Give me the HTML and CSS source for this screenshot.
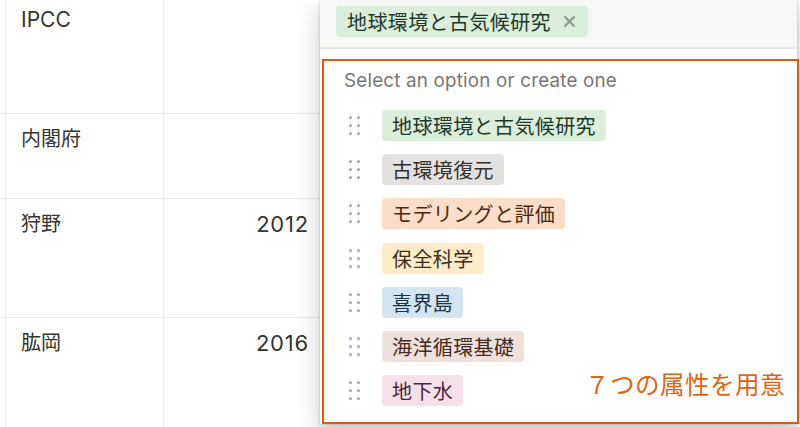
FILE: index.html
```html
<!DOCTYPE html>
<html lang="ja">
<head>
<meta charset="utf-8" />
<meta name="viewport" content="width=device-width, initial-scale=1" />
<title>Notion Multi-select</title>
<link rel="stylesheet" href="styles.css">
</head>
<body>
<div class="page">
  <!-- テーブル -->
  <div class="table">
    <div class="row row-1">
      <div class="cell name latin">IPCC</div>
      <div class="cell year"></div>
    </div>
    <div class="row row-2">
      <div class="cell name">内閣府</div>
      <div class="cell year"></div>
    </div>
    <div class="row row-3">
      <div class="cell name">狩野</div>
      <div class="cell year">2012</div>
    </div>
    <div class="row row-4">
      <div class="cell name">肱岡</div>
      <div class="cell year">2016</div>
    </div>
  </div>

  <!-- Multi-select ポップアップ -->
  <div class="popup">
    <div class="chips">
      <span class="tag green">地球環境と古気候研究
        <svg class="x" viewBox="0 0 13 13"><path d="M1.5 1.5L11.5 11.5M11.5 1.5L1.5 11.5"/></svg>
      </span>
    </div>
    <div class="menu">
      <div class="menu-head">Select an option or create one</div>
      <div class="opt"><svg class="handle" viewBox="0 0 11 19"><circle cx="1.5" cy="1.5" r="1.5"/><circle cx="9.5" cy="1.5" r="1.5"/><circle cx="1.5" cy="9.5" r="1.5"/><circle cx="9.5" cy="9.5" r="1.5"/><circle cx="1.5" cy="17.5" r="1.5"/><circle cx="9.5" cy="17.5" r="1.5"/></svg><span class="tag green">地球環境と古気候研究</span></div>
      <div class="opt"><svg class="handle" viewBox="0 0 11 19"><circle cx="1.5" cy="1.5" r="1.5"/><circle cx="9.5" cy="1.5" r="1.5"/><circle cx="1.5" cy="9.5" r="1.5"/><circle cx="9.5" cy="9.5" r="1.5"/><circle cx="1.5" cy="17.5" r="1.5"/><circle cx="9.5" cy="17.5" r="1.5"/></svg><span class="tag gray">古環境復元</span></div>
      <div class="opt"><svg class="handle" viewBox="0 0 11 19"><circle cx="1.5" cy="1.5" r="1.5"/><circle cx="9.5" cy="1.5" r="1.5"/><circle cx="1.5" cy="9.5" r="1.5"/><circle cx="9.5" cy="9.5" r="1.5"/><circle cx="1.5" cy="17.5" r="1.5"/><circle cx="9.5" cy="17.5" r="1.5"/></svg><span class="tag orange">モデリングと評価</span></div>
      <div class="opt"><svg class="handle" viewBox="0 0 11 19"><circle cx="1.5" cy="1.5" r="1.5"/><circle cx="9.5" cy="1.5" r="1.5"/><circle cx="1.5" cy="9.5" r="1.5"/><circle cx="9.5" cy="9.5" r="1.5"/><circle cx="1.5" cy="17.5" r="1.5"/><circle cx="9.5" cy="17.5" r="1.5"/></svg><span class="tag yellow">保全科学</span></div>
      <div class="opt"><svg class="handle" viewBox="0 0 11 19"><circle cx="1.5" cy="1.5" r="1.5"/><circle cx="9.5" cy="1.5" r="1.5"/><circle cx="1.5" cy="9.5" r="1.5"/><circle cx="9.5" cy="9.5" r="1.5"/><circle cx="1.5" cy="17.5" r="1.5"/><circle cx="9.5" cy="17.5" r="1.5"/></svg><span class="tag blue">喜界島</span></div>
      <div class="opt"><svg class="handle" viewBox="0 0 11 19"><circle cx="1.5" cy="1.5" r="1.5"/><circle cx="9.5" cy="1.5" r="1.5"/><circle cx="1.5" cy="9.5" r="1.5"/><circle cx="9.5" cy="9.5" r="1.5"/><circle cx="1.5" cy="17.5" r="1.5"/><circle cx="9.5" cy="17.5" r="1.5"/></svg><span class="tag brown">海洋循環基礎</span></div>
      <div class="opt"><svg class="handle" viewBox="0 0 11 19"><circle cx="1.5" cy="1.5" r="1.5"/><circle cx="9.5" cy="1.5" r="1.5"/><circle cx="1.5" cy="9.5" r="1.5"/><circle cx="9.5" cy="9.5" r="1.5"/><circle cx="1.5" cy="17.5" r="1.5"/><circle cx="9.5" cy="17.5" r="1.5"/></svg><span class="tag pink">地下水</span></div>
      <!-- 注釈 -->
      <div class="note">７つの属性を用意</div>
    </div>
  </div>
</div>
</body>
</html>
```

FILE: styles.css
```css
:root{--fg:#37352f;--line:#e9e9e7;--accent:#e05b0c}
html,body{width:800px;height:427px;margin:0;background:#fff;color:var(--fg);font-family:Inter,"Noto Sans CJK JP",sans-serif;overflow:hidden}
.page{position:relative;width:800px;height:427px}

/* テーブル */
.table{display:flex;flex-direction:column}
.row{display:flex;padding-left:5px;border-bottom:1px solid var(--line);box-sizing:border-box}
.row-1{height:114px}
.row-2{height:85px}
.row-3{height:119px}
.row-4{height:120px;border-bottom:none}
.cell{font-size:20px;line-height:24px;padding-top:13px;box-sizing:border-box}
.row-1 .cell{padding-top:8px}
.cell.latin{font-size:21px}
.cell.name{width:159px;padding-left:15px;border-left:1px solid var(--line);border-right:1px solid var(--line)}
.cell.year{width:158px;padding-right:13px;text-align:right;font-size:22px;letter-spacing:.8px}

/* ポップアップ */
.popup{position:absolute;left:320px;top:0;width:477px;height:424px;background:#fff;display:flex;flex-direction:column;
  box-shadow:0 0 0 1px rgba(15,15,15,.05),0 3px 6px rgba(15,15,15,.1),0 9px 24px rgba(15,15,15,.2)}
.chips{height:41px;background:#f7f7f5;border-bottom:2px solid var(--line);padding:6px 0 0 16px;flex:none}
.chips .tag{padding:0 12px 0 11px;gap:12px}
.x{width:13px;height:13px;fill:none;stroke:#869b8b;stroke-width:2.2}

.menu{position:relative;flex:1;margin:10px -2px 0 2px;border:2px solid var(--accent);padding:8px 0 0 0}
.menu-head{font-size:18.8px;line-height:24px;color:#787774;padding-left:20px;letter-spacing:.2px;margin-bottom:10px}
.opt{display:flex;align-items:center;height:44.3px;padding-left:25px}
.handle{width:11px;height:19px;fill:#a9a8a5;margin-right:22px}

/* タグ */
.tag{display:inline-flex;align-items:center;height:31px;padding:0 10px;border-radius:4px;font-size:20px;line-height:31px;letter-spacing:.4px;font-family:"Noto Sans CJK JP",sans-serif}
.green{background:#dbeddb;color:#1c3829}
.gray{background:#e3e2e0;color:#32302c}
.orange{background:#fadec9;color:#49290e}
.yellow{background:#fdecc8;color:#402c1b}
.blue{background:#d3e5ef;color:#183347}
.brown{background:#eee0da;color:#442a1e}
.pink{background:#f5e0e9;color:#4c2337}

.note{position:absolute;right:12px;bottom:25px;font-size:24.5px;line-height:26px;letter-spacing:.5px;color:#e2640f;font-family:"Noto Sans CJK JP",sans-serif}
```
